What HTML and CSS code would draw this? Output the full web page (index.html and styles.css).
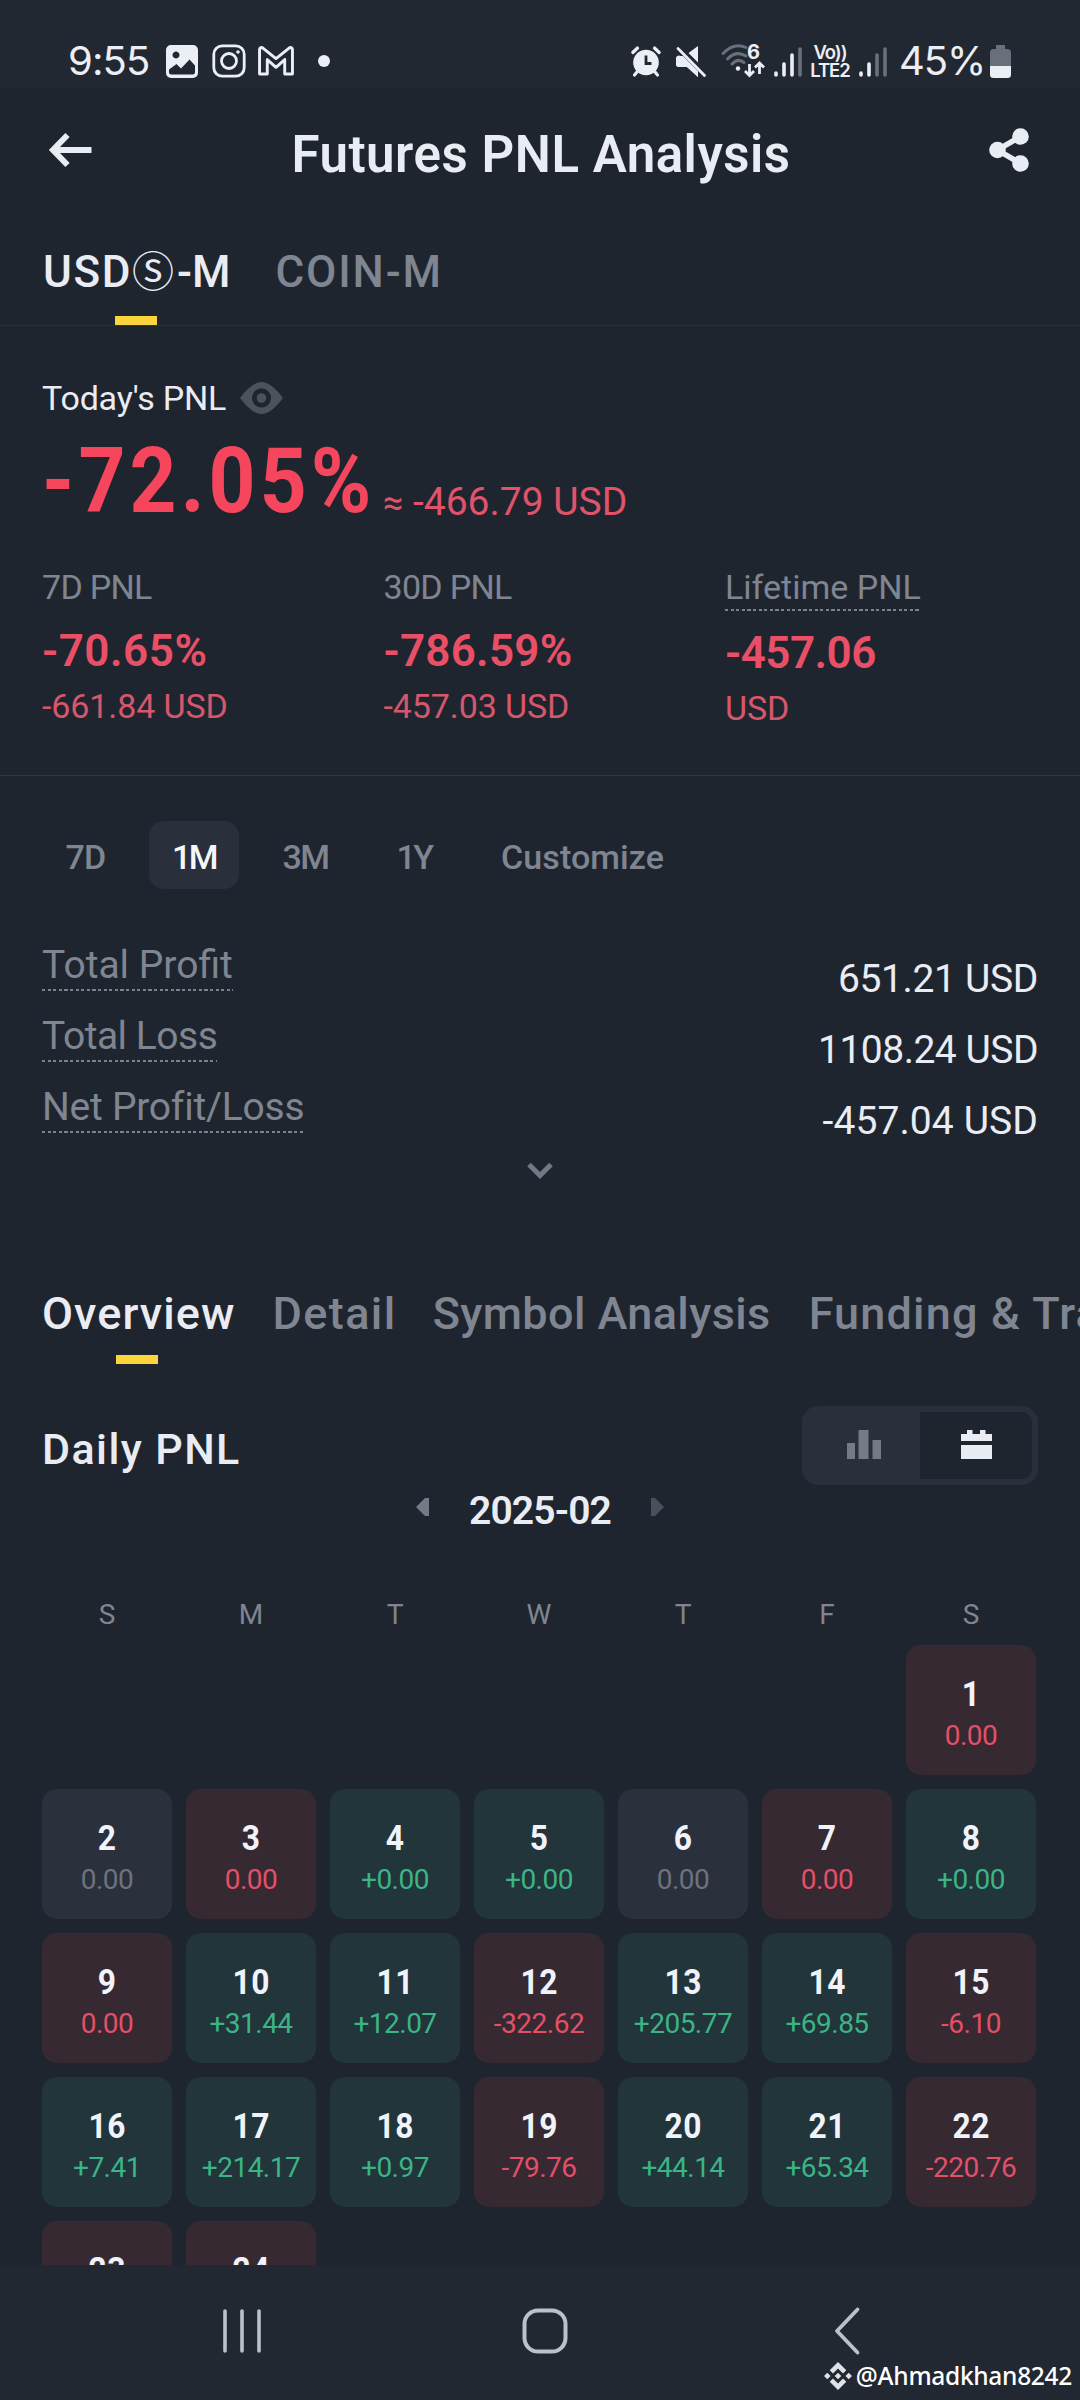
FILE: index.html
```html
<!DOCTYPE html>
<html lang="en">
<head>
<meta charset="utf-8">
<title>Futures PNL Analysis</title>
<link rel="stylesheet" href="styles.css">
</head>
<body>
<div class="screen">
  <div class="status">
    <span class="clock">9:55</span>
    <svg class="i-photo" width="32" height="33" viewBox="0 0 32 33"><path fill="#eceef5" fill-rule="evenodd" d="M5 0h22a5 5 0 0 1 5 5v23a5 5 0 0 1-5 5H5a5 5 0 0 1-5-5V5a5 5 0 0 1 5-5zM10 6.500a3.500 3.500 0 1 0 .01 0zM3 24.500v2.500q0 2.500 2.500 2.500h21q2.500 0 2.500-2.500v-6.500l-5.500-6-8.500 9-4.500-4.500z"/></svg>
    <svg class="i-insta" width="34" height="34" viewBox="0 0 34 34" fill="none" stroke="#eceef5" stroke-width="2.800"><rect x="1.800" y="1.800" width="30.400" height="30.400" rx="8.500"/><circle cx="17" cy="17" r="7.500"/><circle cx="26" cy="8" r="1.800" fill="#eceef5" stroke="none"/></svg>
    <svg class="i-mail" width="36" height="30" viewBox="0 0 37 31" fill="none" stroke="#eceef5" stroke-width="3" stroke-linejoin="round"><path d="M1.500 29V4Q1.500 1.500 4 1.500L18.500 13 33 1.500Q35.500 1.500 35.500 4V29H27.500V14L18.500 22 9.500 14V29z"/></svg>
    <span class="dot"></span>
    <svg class="i-alarm" width="30" height="31" viewBox="0 0 30 31"><g stroke="#eceef5" stroke-width="3.200" stroke-linecap="round" fill="none"><path d="M1.800 6.500 6.500 2M28.200 6.500 23.500 2M6 26 3.500 29M24 26l2.500 3"/></g><circle cx="15" cy="16.500" r="12.800" fill="#eceef5"/><path d="M15 9.500V17.500h5.500" fill="none" stroke="#222831" stroke-width="2.800"/></svg>
    <svg class="i-mute" width="30" height="31" viewBox="0 0 30 31"><path fill="#eceef5" d="M22 0v16.500L12.500 7zM0 13q0-3.500 3.500-3.500L22 27.500V31L11 21H3.500Q0 21 0 18z"/><path d="M2 2 28 29" stroke="#222831" stroke-width="6"/><path fill="#eceef5" d="M0 13q0-3 3-3h4l15 15v6L11 21H3q-3 0-3-3z"/><path d="M2 2.500 28.500 29.500" stroke="#eceef5" stroke-width="2.800" stroke-linecap="round"/></svg>
    <svg class="i-wifi" width="44" height="34" viewBox="0 0 44 34"><g fill="none" stroke="#6a707b" stroke-width="3" stroke-linecap="round"><path d="M2 9.500Q13-2 25 3.500M6.500 15Q15 6 25 12M11 20Q17 13.500 23 18.500"/></g><circle cx="17" cy="24.500" r="2.200" fill="#eceef5"/><g fill="none" stroke="#eceef5" stroke-width="2.800"><path d="M28.500 20v11M24 27l4.500 4.500L33 27M38.500 30V19M34 23.500l4.500-4.500 4.500 4.500"/></g><text class="wifi-gen" x="26" y="15">6</text></svg>
    <svg class="i-sig" width="28" height="31" viewBox="0 0 28 31" stroke-width="3.600" stroke-linecap="round" stroke="#eceef5"><path d="M2 27v2M10 18v11M18 9v20"/><path stroke="#6a707b" d="M26 3v26"/></svg>
    <span class="lte"><span>Vo))</span><span>LTE2</span></span>
    <svg class="i-sig sig2" width="28" height="31" viewBox="0 0 28 31" stroke-width="3.600" stroke-linecap="round" stroke="#eceef5"><path d="M2 27v2M10 18v11"/><path stroke="#6a707b" d="M18 9v20M26 3v26"/></svg>
    <span class="pct">45%</span>
    <svg class="i-batt" width="21" height="33" viewBox="0 0 21 33"><path fill="#6a707b" d="M6 0h9v4h2.500A3.500 3.500 0 0 1 21 7.500V21H0V7.500A3.500 3.500 0 0 1 3.500 4H6z"/><path fill="#eceef5" d="M0 21h21v8.500a3.500 3.500 0 0 1-3.500 3.500h-14A3.500 3.500 0 0 1 0 29.500z"/></svg>
  </div>

  <header class="header">
    <svg width="43" height="34" viewBox="0 0 43 34" fill="none" stroke="#eaecf3" stroke-width="6"><path d="M42.500 17H5M18.500 2 4 17l14.500 15"/></svg>
    <h1>Futures PNL Analysis</h1>
    <svg width="40" height="44" viewBox="0 0 40 44" fill="#eaecf3"><path d="M31.500 8.500 8.500 22l23 13.500" fill="none" stroke="#eaecf3" stroke-width="5.500"/><circle cx="31.500" cy="8.500" r="8.300"/><circle cx="8.500" cy="22" r="8.300"/><circle cx="31.500" cy="35.500" r="8.300"/></svg>
  </header>

  <nav class="market-tabs">
    <span class="mtab active"><span class="usd">USD</span><span class="stable">Ⓢ</span><span>-M</span></span>
    <span class="mtab coin">COIN-M</span>
  </nav>

  <section class="today">
    <div class="today-label"><span>Today's PNL</span><svg width="43" height="32" viewBox="0 0 43 32"><path fill="#4b525c" fill-rule="evenodd" d="M0 16Q12 0 21.500 0T43 16Q31 32 21.500 32T0 16zM21.500 6.500a9.500 9.500 0 1 0 .01 0z"/><circle cx="21.500" cy="16" r="4.800" fill="#4b525c"/></svg></div>
    <div class="today-value"><strong>-72.05%</strong><span class="approx">≈</span><span class="amount">-466.79 USD</span></div>
    <div class="stats">
      <div><div class="s-label d7">7D PNL</div><div class="s-val d7v">-70.65%</div><div class="s-sub">-661.84 USD</div></div>
      <div><div class="s-label d7">30D PNL</div><div class="s-val">-786.59%</div><div class="s-sub">-457.03 USD</div></div>
      <div class="life"><div class="s-label dotted">Lifetime PNL</div><div class="s-val lifev">-457.06</div><div class="s-sub">USD</div></div>
    </div>
  </section>

  <div class="ranges">
    <span class="w7d">7D</span><span class="w1m on">1M</span><span class="w3m">3M</span><span class="w1y">1Y</span><span class="custom">Customize</span>
  </div>

  <section class="summary">
    <div class="row"><span class="dotted">Total Profit</span><span class="v v1">651.21 USD</span></div>
    <div class="row"><span class="dotted loss">Total Loss</span><span class="v v2">1108.24 USD</span></div>
    <div class="row"><span class="dotted net">Net Profit/Loss</span><span class="v v3">-457.04 USD</span></div>
    <svg class="more" width="26" height="17" viewBox="0 0 26 17"><path d="M2 2.500l11 11 11-11" fill="none" stroke="#737984" stroke-width="5"/></svg>
  </section>

  <nav class="view-tabs">
    <span class="vtab active t1">Overview</span><span class="vtab t2">Detail</span><span class="vtab t3">Symbol Analysis</span><span class="vtab t4">Funding &amp; Transaction</span>
  </nav>

  <section class="daily">
    <div class="daily-head">
      <h2>Daily PNL</h2>
      <div class="toggle">
        <span class="opt"><svg width="34" height="29" viewBox="0 0 34 29" fill="#747a86"><path d="M0 13h8v16H0zM11.500 0h10v29h-10zM25.500 10H34v19h-8.500z"/></svg></span>
        <span class="opt sel"><svg width="31" height="29" viewBox="0 0 31 29" fill="#eaecf3"><path d="M0 4h6V0h5.500v4h7.500V0h5.500v4H31v7H0zM0 15h31v14H0z"/></svg></span>
      </div>
    </div>
    <div class="month">
      <svg width="13" height="18" viewBox="0 0 13 18"><path fill="#747a86" d="M13 0H9L0 9l9 9h4z"/></svg>
      <span>2025-02</span>
      <svg width="13" height="18" viewBox="0 0 13 18"><path fill="#4a505b" d="M0 0h4l9 9-9 9H0z"/></svg>
    </div>
    <div class="weekdays"><span>S</span><span>M</span><span>T</span><span>W</span><span>T</span><span>F</span><span>S</span></div>
    <div class="cal">
      <div class="day down first"><b>1</b><i>0.00</i></div>
      <div class="day flat"><b>2</b><i>0.00</i></div>
      <div class="day down"><b>3</b><i>0.00</i></div>
      <div class="day up"><b>4</b><i>+0.00</i></div>
      <div class="day up"><b>5</b><i>+0.00</i></div>
      <div class="day flat"><b>6</b><i>0.00</i></div>
      <div class="day down"><b>7</b><i>0.00</i></div>
      <div class="day up"><b>8</b><i>+0.00</i></div>
      <div class="day down"><b>9</b><i>0.00</i></div>
      <div class="day up"><b>10</b><i>+31.44</i></div>
      <div class="day up"><b>11</b><i>+12.07</i></div>
      <div class="day down"><b>12</b><i>-322.62</i></div>
      <div class="day up"><b>13</b><i>+205.77</i></div>
      <div class="day up"><b>14</b><i>+69.85</i></div>
      <div class="day down"><b>15</b><i>-6.10</i></div>
      <div class="day up"><b>16</b><i>+7.41</i></div>
      <div class="day up"><b>17</b><i>+214.17</i></div>
      <div class="day up"><b>18</b><i>+0.97</i></div>
      <div class="day down"><b>19</b><i>-79.76</i></div>
      <div class="day up"><b>20</b><i>+44.14</i></div>
      <div class="day up"><b>21</b><i>+65.34</i></div>
      <div class="day down"><b>22</b><i>-220.76</i></div>
      <div class="day down"><b>23</b></div>
      <div class="day down"><b>24</b></div>
    </div>
  </section>

  <footer class="navbar">
    <svg width="38" height="44" viewBox="0 0 38 44" stroke="#bcc0c9" stroke-width="3.600" stroke-linecap="round"><path d="M2 2v40M19 2v40M36 2v40"/></svg>
    <svg class="home" width="46" height="46" viewBox="0 0 46 46" fill="none" stroke="#bcc0c9" stroke-width="4"><rect x="2.500" y="2.500" width="41" height="41" rx="13.500"/></svg>
    <svg width="26" height="48" viewBox="0 0 26 48" fill="none" stroke="#bcc0c9" stroke-width="3.800" stroke-linecap="round" stroke-linejoin="round"><path d="M23.500 2.500 3 24l20.500 21.500"/></svg>
  </footer>
  <div class="watermark">
    <svg width="28" height="28" viewBox="0 0 28 28" fill="#dfe1e6"><path d="M14 0l8.300 8.300-3.300 3.300-5-5-5 5-3.300-3.300zM14 28l8.300-8.300-3.300-3.300-5 5-5-5-3.300 3.300zM14 10.700l3.300 3.300-3.300 3.300-3.300-3.300zM3.300 10.700 6.600 14l-3.300 3.300L0 14zM24.700 10.700 28 14l-3.300 3.300-3.300-3.300z"/></svg>
    <span>@Ahmadkhan8242</span>
  </div>
</div>
</body>
</html>
```
FILE: styles.css
```css
* { box-sizing: border-box; }
body { margin: 0; background: #1f252f; }
svg { display: block; flex: none; overflow: visible; }
.screen {
  position: relative;
  width: 1080px;
  height: 2400px;
  overflow: hidden;
  display: flex;
  flex-direction: column;
  background: #1f252f;
  color: #eaecf3;
  font-family: Roboto, sans-serif;
  white-space: nowrap;
}
.screen > * { flex: none; }

/* status bar */
.status {
  height: 88px;
  padding: 34px 69px 0 68px;
  display: flex;
  align-items: center;
  background: #222831;
  color: #eceef5;
}
.clock, .pct { font: 400 40px/40px Inter, sans-serif; letter-spacing: -0.9px; }
.clock { width: 98px; }
.i-insta { margin-left: 14px; }
.i-mail { margin-left: 12px; }
.dot { width: 12px; height: 12px; border-radius: 50%; background: #eceef5; margin-left: 24px; }
.i-alarm { margin-left: auto; }
.i-mute { margin-left: 15px; }
.i-wifi { margin-left: 15px; }
.wifi-gen { font: 700 20px Inter, sans-serif; fill: #eceef5; }
.i-sig { margin-left: 9px; }
.lte {
  display: flex;
  flex-direction: column;
  align-items: center;
  width: 40px;
  margin-left: 8px;
  font: 600 18.500px/18px Inter, sans-serif;
  letter-spacing: -1px;
}
.pct { width: 83px; margin-left: 12px; letter-spacing: -1.1px; }
.i-batt { margin-left: 8px; }

/* title bar */
.header {
  height: 132px;
  padding: 2px 51px 0 49px;
  display: flex;
  align-items: center;
  justify-content: space-between;
}
.header svg { margin-bottom: 10px; }
h1 { margin: 0 0 0 1px; font: 600 51px/60px Roboto, sans-serif; letter-spacing: 0.54px; }

/* margin type tabs */
.market-tabs {
  height: 106px;
  padding: 0 42px;
  display: flex;
  gap: 45px;
  border-bottom: 1px solid #2b313c;
  font-size: 44px;
  font-weight: 500;
  line-height: 104px;
  color: #7f8591;
}
.mtab { position: relative; display: flex; }
.mtab.active { padding-left: 1px; }
.active { color: #eaecf3; }
.active::after {
  content: "";
  position: absolute;
  bottom: 0;
  left: 50%;
  width: 42px;
  height: 9px;
  margin-left: -21px;
  background: #fbd53d;
}
.usd { letter-spacing: 1.6px; }
.stable { font: 400 42px/98px "Noto Sans CJK SC", sans-serif; width: 45px; }
.coin { letter-spacing: 1.9px; }

/* today's result */
.today { height: 450px; padding: 47px 42px 0; border-bottom: 1px solid #313741; }
.today-label {
  height: 50px;
  display: flex;
  align-items: center;
  gap: 14px;
  font-size: 34px;
  letter-spacing: -0.2px;
}
.today-value { display: flex; height: 117px; color: #f6465d; }
.today-value strong {
  width: 327px;
  font: 700 91px/117px Roboto, sans-serif;
  letter-spacing: 4.600px;
  transform: scaleX(0.9);
  transform-origin: 0 50%;
}
.approx { font-size: 36px; line-height: 40px; margin: 60px 0 0 14px; width: 30px; color: #e0536a; }
.amount { font-size: 39px; line-height: 40px; margin-top: 59px; color: #e0536a; }
.stats { display: grid; grid-template-columns: repeat(3, 313px); gap: 28.500px; margin-top: 27px; }
.s-label { font-size: 34px; line-height: 40px; color: #7f8591; }
.d7 { letter-spacing: -0.7px; }
.s-val { font-size: 44px; font-weight: 600; line-height: 48px; margin-top: 20px; color: #e95067; letter-spacing: 0.27px; }
.d7v { letter-spacing: 0.55px; }
.lifev { letter-spacing: -0.5px; }
.s-sub { font-size: 34px; line-height: 40px; margin-top: 11px; color: #d5576b; letter-spacing: -0.1px; }
.dotted {
  display: inline-block;
  background: repeating-linear-gradient(90deg, #7b818d 0 3.300px, transparent 3.300px 5.600px) 0 100% / 100% 2px no-repeat;
}
.life .dotted { height: 44px; }
.life .s-val { margin-top: 18px; }

/* range picker */
.ranges {
  display: flex;
  padding: 0 42px;
  margin-top: 45px;
  height: 68px;
  gap: 20px;
  font-size: 34px;
  font-weight: 500;
  line-height: 73px;
  color: #7f8591;
  text-align: center;
}
.w7d { width: 87px; letter-spacing: -0.8px; }
.w1m { width: 90px; letter-spacing: -2.500px; }
.w3m { width: 93px; letter-spacing: -1.500px; }
.w1y { width: 84px; letter-spacing: -2.500px; }
.custom { padding-left: 25px; letter-spacing: 0.1px; }
.on { background: #2a303b; border-radius: 15px; color: #f4f6fb; }

/* summary */
.summary { margin-top: 54px; height: 319px; padding: 0 42px; font-size: 39px; }
.row { display: flex; justify-content: space-between; align-items: flex-start; height: 71px; }
.row .dotted { height: 48px; line-height: 44px; color: #7f8591; }
.row .loss { letter-spacing: -0.5px; }
.row .net { letter-spacing: -0.25px; }
.v { line-height: 73px; }
.v1 { letter-spacing: -0.35px; }
.v2 { letter-spacing: -0.5px; }
.v3 { letter-spacing: 0.1px; }
.more { margin: 6px auto 0; }

/* section tabs */
.view-tabs {
  height: 102px;
  display: flex;
  padding-left: 42px;
  font-size: 45px;
  font-weight: 500;
  line-height: 104px;
  color: #7f8591;
}
.vtab { position: relative; flex: none; }
.t1 { letter-spacing: 1.1px; }
.t1::after { margin-left: -23px; }
.t2 { letter-spacing: 1.4px; margin-left: 37px; }
.t3 { letter-spacing: 0.4px; margin-left: 36px; }
.t4 { letter-spacing: 1.17px; margin-left: 38px; }

/* daily block */
.daily { margin-top: 42px; height: 859px; padding: 0 42px; overflow: hidden; }
.daily-head { display: flex; justify-content: space-between; height: 79px; }
h2 { margin: 0; font: 500 43px/87px Roboto, sans-serif; letter-spacing: 1.4px; }
.toggle {
  display: flex;
  width: 236px;
  height: 79px;
  padding: 6px;
  border-radius: 16px;
  background: #2a303b;
}
.opt { width: 112px; display: flex; align-items: center; justify-content: center; }
.sel { background: #1f252f; border-radius: 0 11px 11px 0; }
.opt svg { margin-bottom: 2px; }
.month {
  display: flex;
  align-items: center;
  justify-content: center;
  height: 50px;
  gap: 40px;
  font-size: 39px;
  font-weight: 600;
  letter-spacing: -0.85px;
}
.month span { margin-top: 1px; }
.month svg { margin-bottom: 6px; }
.weekdays {
  margin-top: 49px;
  height: 61px;
  display: grid;
  grid-template-columns: repeat(7, 130px);
  gap: 14px;
  text-align: center;
  font-size: 28px;
  line-height: 62px;
  color: #7f8591;
}
.cal { display: grid; grid-template-columns: repeat(7, 130px); grid-auto-rows: 130px; gap: 14px; }
.day {
  border-radius: 15px;
  padding-top: 29px;
  display: flex;
  flex-direction: column;
  align-items: center;
}
.first { grid-column: 7; }
.day b { font-weight: 700; font-size: 34.500px; line-height: 40px; color: #f1f3fa; letter-spacing: 0.5px; transform: scaleX(0.92); }
.day i { font-style: normal; font-size: 28px; line-height: 43px; letter-spacing: -0.5px; }
.down { background: #372932; color: #e25067; }
.up { background: #22353a; color: #3bb486; }
.flat { background: #2a303c; color: #6c727e; }

/* system navigation */
.navbar {
  height: 135px;
  padding: 0 220px 0 223px;
  display: flex;
  align-items: center;
  justify-content: space-between;
  background: #222831;
}
.navbar svg { margin-bottom: 3px; }
.navbar .home { margin-right: 6px; }
.watermark {
  position: absolute;
  right: 8px;
  bottom: 5px;
  display: flex;
  align-items: center;
  gap: 4px;
  font: 500 24.500px/38px "Noto Sans", sans-serif;
  letter-spacing: -0.3px;
  color: #fff;
}
```
